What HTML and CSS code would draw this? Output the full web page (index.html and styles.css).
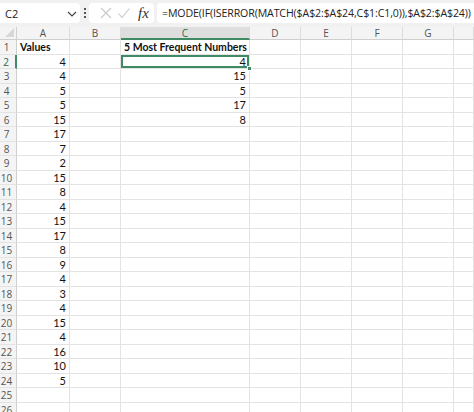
FILE: index.html
```html
<!DOCTYPE html>
<html>
<head>
<meta charset="utf-8">
<link rel="stylesheet" href="styles.css">
</head>
<body>
<div class="fbar">
  <div class="namebox"><span class="ref">C2</span>
    <svg class="chev" width="10" height="6" viewBox="0 0 10 6"><path d="M1 1l4 4 4-4" fill="none" stroke="#444" stroke-width="1.2"/></svg>
  </div>
  <div class="dots"><i></i><i></i><i></i></div>
  <div class="btns">
    <svg width="12" height="12" viewBox="0 0 12 12"><path d="M1 1l10 10M11 1L1 11" stroke="#c8c8c8" stroke-width="1.1"/></svg>
    <svg width="12" height="12" viewBox="0 0 12 12"><path d="M0.5 6.5l3.5 4L11.5 1.5" fill="none" stroke="#c8c8c8" stroke-width="1.1"/></svg>
    <span class="fx">fx</span>
  </div>
  <div class="formula">=MODE(IF(ISERROR(MATCH($A$2:$A$24,C$1:C1,0)),$A$2:$A$24))</div>
</div>
<div class="sheet" id="sheet"></div>
<script src="app.js"></script>
</body>
</html>
```
FILE: styles.css
```css
html, body { margin: 0; padding: 0; background: #fff; overflow: hidden; }
body { width: 474px; height: 412px; }
.fbar {
  height: 27px; background: #f1f1f1; display: flex; align-items: flex-start; padding-top: 3px; box-sizing: border-box;
  font-family: "Open Sans", "Noto Sans", sans-serif; color: #222;
}
.namebox {
  width: 80px; height: 20px; background: #fff; border-radius: 0 4px 4px 0;
  display: flex; align-items: center; justify-content: space-between;
  padding: 0 3px 0 5px; box-sizing: border-box; font-size: 11px;
}
.chev { margin-top: 1px; }
.dots { width: 9px; height: 20px; display: flex; flex-direction: column; align-items: center; justify-content: center; gap: 2px; }
.dots i { width: 2px; height: 2px; background: #555; display: block; }
.btns {
  width: 65px; height: 20px; background: #fff; border-radius: 4px;
  display: flex; align-items: center; gap: 6px; padding: 0 0 0 11px; box-sizing: border-box;
}
.fx { font-family: "Liberation Serif", serif; font-style: italic; font-size: 15px; color: #333; margin-left: 2px; line-height: 18px; }
.formula {
  flex: 1; height: 20px; margin-left: 3px; background: #fff; border-radius: 4px 0 0 4px;
  font-size: 10.6px; line-height: 20px; padding-left: 5px; white-space: nowrap; overflow: hidden;
  letter-spacing: -0.12px;
}
.sheet {
  display: grid; width: 474px; overflow: hidden;
  grid-template-columns: 17px 53px 51px 129px 51px 51px 51px 51px 1fr;
  grid-template-rows: 13px repeat(26, 14.5px);
  font-family: "Lato", "Carlito", sans-serif; font-size: 11px; color: #111;
}
.c {
  border-right: 1px solid #e3e3e3; border-bottom: 1px solid #e3e3e3;
  box-sizing: border-box; padding: 0 3px; white-space: nowrap; overflow: visible;
  line-height: 14px; position: relative;
}
.c.num { text-align: right; }
.c.b { font-weight: bold; font-size: 10.5px; }
.h {
  background: #f4f4f4; color: #555; text-align: center;
  font-family: "Open Sans", "Noto Sans", sans-serif; font-size: 10px;
  border-right: 1px solid #dcdcdc; border-bottom: 1px solid #cfcfcf;
  box-sizing: border-box; line-height: 12px;
}
.rh {
  background: #f4f4f4; color: #555; text-align: center; padding-right: 3px;
  font-family: "Open Sans", "Noto Sans", sans-serif; font-size: 10px;
  border-right: 1px solid #cfcfcf; border-bottom: 1px solid #e3e3e3;
  box-sizing: border-box; line-height: 14px;
}
.corner { position: relative; background: #f4f4f4; border-right: 1px solid #cfcfcf; border-bottom: 1px solid #cfcfcf; box-sizing: border-box; }
.corner::after {
  content: ""; position: absolute; right: 2px; bottom: 2px; width: 0; height: 0;
  border-left: 9px solid transparent; border-bottom: 9px solid #d7d7d7;
}
.h.sel { background: #dedede; color: #1e6b45; border-bottom: 2px solid #3f8a64; }
.rh.sel { color: #1e6b45; border-right: 2px solid #3f8a64; }
.c.active { box-shadow: inset 0 0 0 2px #3f8a64; }
.c.active::after {
  content: ""; position: absolute; right: -3px; bottom: -3px; width: 5px; height: 5px;
  background: #3f8a64; border: 1px solid #fff; box-sizing: border-box; z-index: 2;
}
```
FILE: app.js
```js
const vals=[4,4,5,5,15,17,7,2,15,8,4,15,17,8,9,4,3,4,15,4,16,10,5];
const top5=[4,15,5,17,8];
const cols=['A','B','C','D','E','F','G',''];
const s=document.getElementById('sheet');
let h='<div class="corner"></div>';
cols.forEach(c=>{h+=`<div class="h${c==='C'?' sel':''}">${c}</div>`;});
for(let r=1;r<=26;r++){
  h+=`<div class="rh${r===2?' sel':''}">${r}</div>`;
  for(let i=0;i<8;i++){
    let cls='c',t='';
    if(r===1&&i===0){cls+=' b';t='Values';}
    else if(r===1&&i===2){cls+=' b';t='5 Most Frequent Numbers';}
    else if(i===0&&r>=2&&r<=24){cls+=' num';t=vals[r-2];}
    else if(i===2&&r>=2&&r<=6){cls+=' num';t=top5[r-2];}
    if(i===2&&r===2)cls+=' active';
    h+=`<div class="${cls}">${t}</div>`;
  }
}
s.innerHTML=h;
```
